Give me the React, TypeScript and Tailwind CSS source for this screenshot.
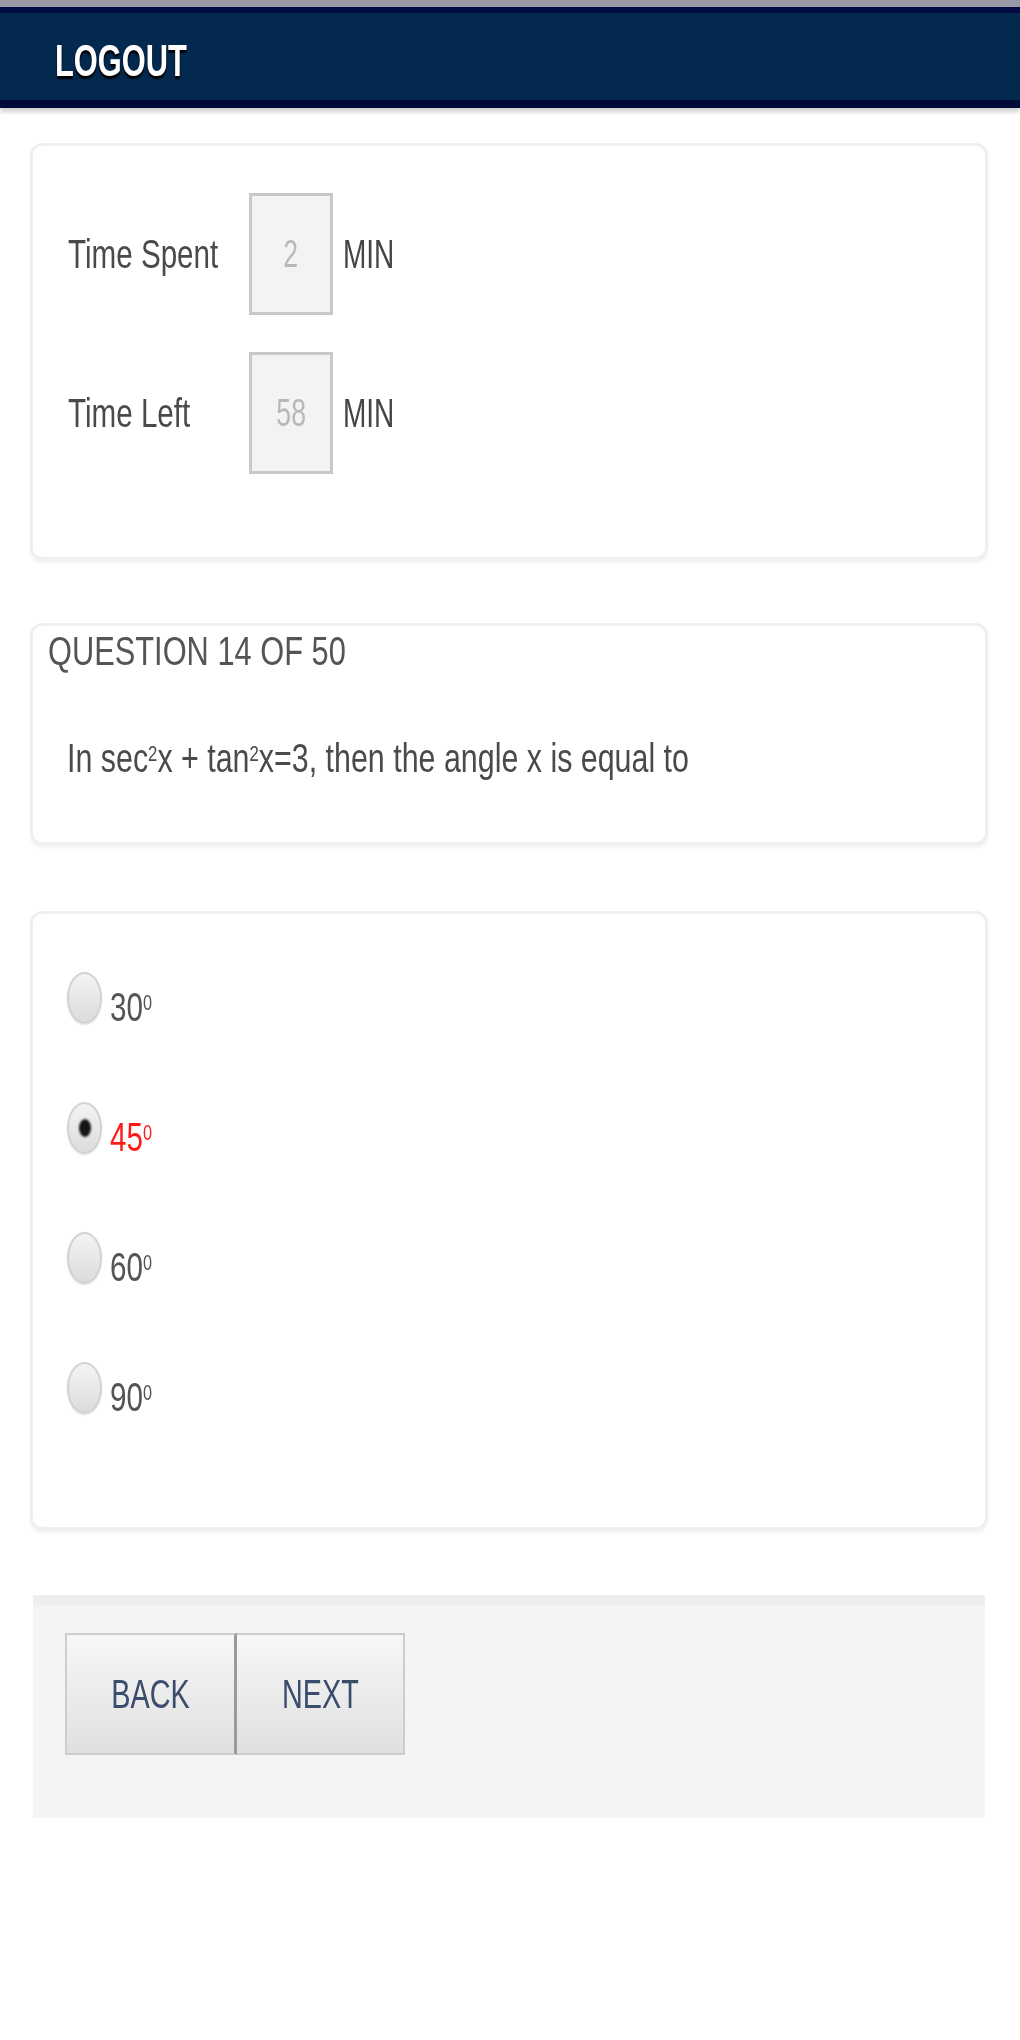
import { ReactNode } from 'react';

type Option = { value: string; selected?: boolean };

const OPTIONS: Option[] = [
  { value: '30' },
  { value: '45', selected: true },
  { value: '60' },
  { value: '90' },
];

// the screenshot is horizontally squeezed, so text is narrowed with scale-x
function Narrow({ children, className = 'scale-x-[0.74]' }: { children: ReactNode; className?: string }) {
  return <span className={`inline-block origin-left whitespace-nowrap ${className}`}>{children}</span>;
}

function TimeRow({ label, value }: { label: string; value: string }) {
  return (
    <div className="flex h-[122px] items-center">
      <div className="w-[181px] text-[40px] leading-[46px] text-[#4a4a4a]">
        <Narrow>{label}</Narrow>
      </div>
      <div className="flex h-[122px] w-[84px] items-center justify-center border-[3px] border-[#c8c8c8] bg-[#f3f3f3] text-[38px] text-[#b8b8b8]">
        <span className="inline-block scale-x-[0.7]">{value}</span>
      </div>
      <div className="ml-[10px] text-[40px] leading-[46px] text-[#444]">
        <Narrow className="scale-x-[0.7]">MIN</Narrow>
      </div>
    </div>
  );
}

function Radio({ checked }: { checked?: boolean }) {
  return (
    <div className="flex h-[52px] w-[35px] shrink-0 items-center justify-center rounded-[50%] border-2 border-[#d2d2d2] bg-gradient-to-b from-[#f4f4f4] to-[#dcdcdc] shadow-[0_1px_2px_rgba(0,0,0,0.12)]">
      {checked && <div className="h-[18px] w-[12px] rounded-[50%] bg-[#151515] blur-[1px]" />}
    </div>
  );
}

export default function App() {
  return (
    <div className="min-h-[2040px] bg-white font-['Liberation_Sans',Arial,sans-serif]">
      <div className="h-[7px] bg-[#9a9aa6]" />
      <header className="flex h-[101px] items-center border-t-[6px] border-b-[8px] border-t-[#020c42] border-b-[#010a36] bg-[#03294f] pl-[55px] pt-[8px] shadow-[0_4px_4px_rgba(0,0,0,0.18)]">
        <span className="inline-block origin-left scale-x-[0.7] text-[44px] font-bold leading-[50px] text-white [text-shadow:0_3px_2px_#000]">
          LOGOUT
        </span>
      </header>

      <main className="mx-[30px] w-[958px]">
        <section className="mt-[35px] h-[417px] rounded-[12px] border-[3px] border-[#efefef] bg-white pl-[35px] pt-[47px] shadow-[0_3px_3px_rgba(0,0,0,0.05)]">
          <TimeRow label="Time Spent" value="2" />
          <div className="mt-[37px]">
            <TimeRow label="Time Left" value="58" />
          </div>
        </section>

        <section className="mt-[63px] h-[222px] rounded-[12px] border-[3px] border-[#efefef] bg-white pl-[15px] pt-[2px] shadow-[0_3px_3px_rgba(0,0,0,0.05)]">
          <div className="text-[40px] leading-[46px] text-[#555]">
            <Narrow className="scale-x-[0.77]">QUESTION 14 OF 50</Narrow>
          </div>
          <p className="ml-[19px] mt-[61px] text-[40px] leading-[46px] text-[#4a4a4a]">
            <Narrow className="scale-x-[0.76]">
              In sec<sup className="text-[22px]">2</sup>x + tan<sup className="text-[22px]">2</sup>x=3, then the angle x is equal to
            </Narrow>
          </p>
        </section>

        <section className="mt-[66px] h-[619px] rounded-[12px] border-[3px] border-[#efefef] bg-white pl-[34px] pt-[58px] shadow-[0_3px_3px_rgba(0,0,0,0.05)]">
          {OPTIONS.map((opt) => (
            <div key={opt.value} className="flex h-[130px] items-start gap-[8px]">
              <Radio checked={opt.selected} />
              <div className={`mt-[12px] text-[40px] leading-[46px] ${opt.selected ? 'text-[#ff1a1a]' : 'text-[#555]'}`}>
                <Narrow>
                  {opt.value}
                  <sup className="text-[22px]">0</sup>
                </Narrow>
              </div>
            </div>
          ))}
        </section>

        <footer className="ml-[3px] mt-[65px] h-[223px] w-[952px] border-t-[10px] border-[#eeeeee] bg-[#f4f4f4] pl-[32px] pt-[28px]">
          <div className="flex">
            {['BACK', 'NEXT'].map((label, i) => (
              <button
                key={label}
                className={`flex h-[122px] items-center justify-center border-2 border-[#cdcdcd] bg-gradient-to-b from-[#f7f7f7] to-[#e0e0e0] text-[40px] text-[#3b4d6d] ${
                  i === 0 ? 'w-[172px] border-r-[3px] border-r-[#9a9a9a]' : 'w-[168px] border-l-0'
                }`}
              >
                <span className="inline-block scale-x-[0.72]">{label}</span>
              </button>
            ))}
          </div>
        </footer>
      </main>
    </div>
  );
}
